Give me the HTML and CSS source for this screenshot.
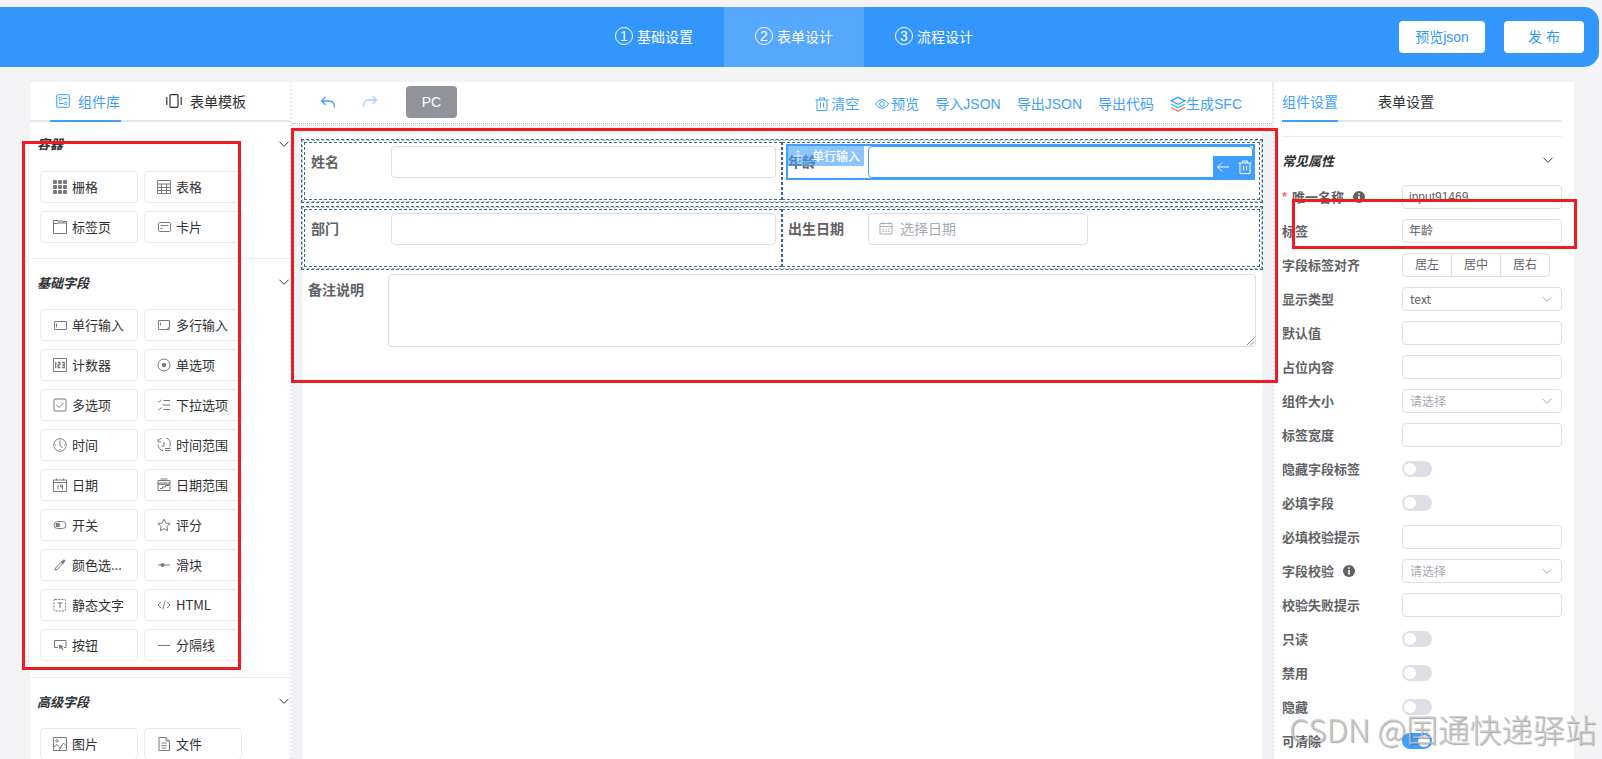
FILE: index.html
```html
<!DOCTYPE html>
<html lang="zh-CN">
<head>
    <meta charset="UTF-8">
    <meta name="viewport" content="width=device-width, initial-scale=1.0">
    <title>表单设计</title>
    <link rel="stylesheet" href="styles.css">
</head>
<body>
    <!-- icons -->
    <svg class="sprite" width="0" height="0">
        <symbol id="i-down" viewBox="0 0 12 12"><path d="M1.5 3.8 6 8.3l4.5-4.5"/></symbol>
        <symbol id="i-trash" viewBox="0 0 14 14"><path d="M.5 3h13M4.5 3V1h5v2M2 3v10.5h10V3M5.5 5.8v4.7M8.5 5.8v4.7"/></symbol>
        <symbol id="i-grid" viewBox="0 0 14 14"><g fill="currentColor" stroke="none"><rect width="4" height="4" rx="1"/><rect x="5" width="4" height="4" rx="1"/><rect x="10" width="4" height="4" rx="1"/><rect y="5" width="4" height="4" rx="1"/><rect x="5" y="5" width="4" height="4" rx="1"/><rect x="10" y="5" width="4" height="4" rx="1"/><rect y="10" width="4" height="4" rx="1"/><rect x="5" y="10" width="4" height="4" rx="1"/><rect x="10" y="10" width="4" height="4" rx="1"/></g></symbol>
        <symbol id="i-table" viewBox="0 0 14 14"><path d="M.5.5h13v13H.5zM.5 4h13M.5 7.5h13M.5 10.5h13M4.500 4v9.500M9.500 4v9.500"/></symbol>
        <symbol id="i-tab" viewBox="0 0 14 14"><path d="M.5 13.500V.5h4.500l1 2.500h7.500v10.500zM.5 3.500h5M6 1h4v2M10 1.500h3.500V3"/></symbol>
        <symbol id="i-card" viewBox="0 0 14 14"><rect x="1.500" y="2.500" width="12" height="9" rx="1"/><path d="M3.500 5.500h8M3.500 8.500h2"/></symbol>
        <symbol id="i-input" viewBox="0 0 14 14"><rect x="1.500" y="3.500" width="12" height="8" rx=".5"/><path d="M3.500 5.500v4"/></symbol>
        <symbol id="i-textarea" viewBox="0 0 14 14"><rect x="1.500" y="2.500" width="11" height="9" rx=".5"/><path d="M3.500 4.500v3M10 11.500l2.500-2.500"/></symbol>
        <symbol id="i-number" viewBox="0 0 14 14"><path d="M.5.5h13v13H.5z"/><path stroke-width="1.300" d="M2.700 4v6M5 4.500h2v2.300H5.200v2.700h2.200M9 4.500h2.300v5H9M9.300 7h2"/></symbol>
        <symbol id="i-radio" viewBox="0 0 14 14"><circle cx="7" cy="7" r="6"/><circle cx="7" cy="7" r="2.200" fill="currentColor" stroke="none"/></symbol>
        <symbol id="i-check" viewBox="0 0 14 14"><rect x="1" y="1" width="12" height="12" rx="1"/><path d="m3.500 7 2.500 2.500L10.500 5"/></symbol>
        <symbol id="i-list" viewBox="0 0 14 14"><path d="M6.500 2.500h6.500M5.500 7h7.500M6.500 11.500h6.500M1 3l1.200 1.200L4.500 2M1 10.500l1.200 1.200L4.500 9.500"/></symbol>
        <symbol id="i-clock" viewBox="0 0 14 14"><circle cx="7" cy="7" r="6.300"/><path d="M7 2.500V7l2.500 3M2 7h1M11 7h1M7 12v-1"/></symbol>
        <symbol id="i-clockr" viewBox="0 0 14 14"><path d="M2 2.500A6 6 0 0 1 13 7v2M1 1v3h3M1 6.500a6 6 0 0 0 5.500 6.200M7 4v4H4.500M8 10.500h5.500M8 12.500h5.500"/></symbol>
        <symbol id="i-date" viewBox="0 0 14 14"><path d="M.5 2h13v11.500H.5zM.5 4.500h13M3.500.5v2M10.500.5v2M5 7v4.500M7.500 7h2v4.500M7.500 7v2h2"/></symbol>
        <symbol id="i-dater" viewBox="0 0 14 14"><path d="M1 2.500h12v10H1zM1 5h12M3.500 1h7M3 10.500h2.500V9h3V7.500H12M1 6.300h12"/></symbol>
        <symbol id="i-switch" viewBox="0 0 14 14"><rect x="1" y="3.500" width="12" height="7" rx="3.500"/><circle cx="4.800" cy="7" r="2.300" fill="currentColor" stroke="none"/></symbol>
        <symbol id="i-star" viewBox="0 0 14 14"><path d="m7 1.200 1.800 3.900 4.200.5-3.100 2.900.8 4.200L7 10.600l-3.700 2.100.8-4.200L1 5.600l4.200-.5z"/></symbol>
        <symbol id="i-pick" viewBox="0 0 14 14"><path d="m2 12 .8-2.500L9 3.500l1.500 1.500-6 6.200z"/><path stroke-width="2.400" d="m8.800 5.200 3-3"/></symbol>
        <symbol id="i-slider" viewBox="0 0 14 14"><path d="M1 7h12"/><circle cx="5.500" cy="7" r="2" fill="currentColor" stroke="none"/></symbol>
        <symbol id="i-text" viewBox="0 0 14 14"><rect x="1" y="1.500" width="11.500" height="11.500" rx="1" stroke-dasharray="2 1.200"/><path d="M4.500 5h5M7 5v5"/></symbol>
        <symbol id="i-html" viewBox="0 0 14 14"><path d="M4 4 1 7l3 3M10 4l3 3-3 3M8.200 2.500l-2.400 9"/></symbol>
        <symbol id="i-button" viewBox="0 0 14 14"><path d="M5 9.500H1.500v-7h11.500v7h-2"/><path d="m5.500 6.500 5.500 2-2 .8 1.500 2.500-1 .6L8 10l-1.500 1.300z" fill="currentColor" stroke="none"/></symbol>
        <symbol id="i-line" viewBox="0 0 14 14"><path d="M1 7.500h12"/></symbol>
        <symbol id="i-pic" viewBox="0 0 14 14"><path d="M.5.5h13v13H.5z"/><circle cx="4" cy="3.800" r="1.200"/><path d="m.5 10.500 3.500-3 3 3.500 3.500-5 3 3M6 13.500l1.500-2.500"/></symbol>
        <symbol id="i-file" viewBox="0 0 14 14"><path d="M2 .5h7l3.500 3.500v9.500H2zM9 .5V4h3.500M4.500 6h5M4.500 8.500h5M4.500 11h5"/></symbol>
        <symbol id="i-info" viewBox="0 0 12 12"><circle cx="6" cy="6" r="6" fill="currentColor" stroke="none"/><path stroke="#fff" stroke-width="1.600" d="M6 2.300v1.400M6 5v4.500"/></symbol>
    </svg>

    <header class="header">
        <nav class="steps">
            <div class="step"><span class="num">1</span>基础设置</div>
            <div class="step active"><span class="num">2</span>表单设计</div>
            <div class="step"><span class="num">3</span>流程设计</div>
        </nav>
        <div class="header-btns">
            <button class="btn-preview">预览json</button>
            <button class="btn-publish">发 布</button>
        </div>
    </header>

    <main class="designer">
        <aside class="left">
            <div class="left-tabs">
                <div class="left-tab active">
                    <svg class="tab-icon" viewBox="0 0 14 14"><rect x=".7" y=".7" width="12.600" height="12.600" rx="1"/><circle cx="4.500" cy="4.500" r="1.500"/><circle cx="9.500" cy="9.500" r="1.500"/><path d="M7 4.500h4M3 9.500h4M3 7h1"/></svg>
                    组件库
                </div>
                <div class="left-tab">
                    <svg class="tab-icon wide" viewBox="0 0 16 14"><rect x="4" y=".7" width="8" height="12.600" rx="1"/><path d="M.8 3v8M15.200 3v8"/></svg>
                    表单模板
                </div>
            </div>

            <section class="group first">
                <h3>容器<svg class="chev"><use href="#i-down"/></svg></h3>
                <div class="widgets">
                    <div class="widget"><svg><use href="#i-grid"/></svg>栅格</div>
                    <div class="widget"><svg><use href="#i-table"/></svg>表格</div>
                    <div class="widget"><svg><use href="#i-tab"/></svg>标签页</div>
                    <div class="widget"><svg><use href="#i-card"/></svg>卡片</div>
                </div>
            </section>

            <section class="group">
                <h3>基础字段<svg class="chev"><use href="#i-down"/></svg></h3>
                <div class="widgets">
                    <div class="widget"><svg><use href="#i-input"/></svg>单行输入</div>
                    <div class="widget"><svg><use href="#i-textarea"/></svg>多行输入</div>
                    <div class="widget"><svg><use href="#i-number"/></svg>计数器</div>
                    <div class="widget"><svg><use href="#i-radio"/></svg>单选项</div>
                    <div class="widget"><svg><use href="#i-check"/></svg>多选项</div>
                    <div class="widget"><svg><use href="#i-list"/></svg>下拉选项</div>
                    <div class="widget"><svg><use href="#i-clock"/></svg>时间</div>
                    <div class="widget"><svg><use href="#i-clockr"/></svg>时间范围</div>
                    <div class="widget"><svg><use href="#i-date"/></svg>日期</div>
                    <div class="widget"><svg><use href="#i-dater"/></svg>日期范围</div>
                    <div class="widget"><svg><use href="#i-switch"/></svg>开关</div>
                    <div class="widget"><svg><use href="#i-star"/></svg>评分</div>
                    <div class="widget"><svg><use href="#i-pick"/></svg>颜色选...</div>
                    <div class="widget"><svg><use href="#i-slider"/></svg>滑块</div>
                    <div class="widget"><svg><use href="#i-text"/></svg>静态文字</div>
                    <div class="widget"><svg><use href="#i-html"/></svg>HTML</div>
                    <div class="widget"><svg><use href="#i-button"/></svg>按钮</div>
                    <div class="widget"><svg><use href="#i-line"/></svg>分隔线</div>
                </div>
            </section>

            <section class="group">
                <h3>高级字段<svg class="chev"><use href="#i-down"/></svg></h3>
                <div class="widgets">
                    <div class="widget"><svg><use href="#i-pic"/></svg>图片</div>
                    <div class="widget"><svg><use href="#i-file"/></svg>文件</div>
                </div>
            </section>
        </aside>

        <section class="center">
            <div class="toolbar">
                <svg class="undo" viewBox="0 0 16 14"><path d="M5.500 1 1.500 5l4 4M1.500 5H9c3.500 0 5.500 2 5.500 6.500"/></svg>
                <svg class="undo redo" viewBox="0 0 16 14"><path d="m10.500 0 4 4-4 4M14.500 4H7c-3.500 0-5.500 2-5.500 6.500"/></svg>
                <button class="device">PC</button>
                <div class="actions">
                    <a><svg><use href="#i-trash"/></svg>清空</a>
                    <a><svg viewBox="0 0 14 14"><path d="M.5 7Q3.500 2.500 7 2.500T13.500 7Q10.500 11.500 7 11.500T.5 7z"/><circle cx="7" cy="7" r="2.300"/></svg>预览</a>
                    <a>导入JSON</a>
                    <a>导出JSON</a>
                    <a>导出代码</a>
                    <a class="sfc"><svg viewBox="0 0 16 16"><path stroke="#f56c6c" d="m1 11.500 7 3.500 7-3.500"/><path stroke="#36cfc9" d="m1 8.200 7 3.500 7-3.500"/><path d="m8 1.300 7 3.500-7 3.500-7-3.500z"/></svg>生成SFC</a>
                </div>
            </div>
            <div class="canvas">
                <div class="grid-row">
                    <div class="grid-col">
                        <div class="field"><label>姓名</label><div class="input"></div></div>
                    </div>
                    <div class="grid-col">
                        <div class="field selected">
                            <label>年龄</label><div class="input"></div>
                            <div class="drag-tag">
                                <svg viewBox="0 0 14 14"><path d="M7 1v12M1 7h12M5.500 2.500 7 1l1.500 1.500M5.500 11.500 7 13l1.500-1.500"/></svg>单行输入
                            </div>
                            <div class="field-actions">
                                <svg viewBox="0 0 14 14"><path d="M13 7H1.500M6 2.500 1.500 7 6 11.500"/></svg>
                                <svg><use href="#i-trash"/></svg>
                            </div>
                        </div>
                    </div>
                </div>
                <div class="grid-row">
                    <div class="grid-col">
                        <div class="field"><label>部门</label><div class="input"></div></div>
                    </div>
                    <div class="grid-col">
                        <div class="field">
                            <label>出生日期</label>
                            <div class="input date">
                                <svg viewBox="0 0 14 14"><path d="M1 2.500h12v10.500H1zM1 5.500h12M4 1v2.500M10 1v2.500M3.500 8h1.500M6.300 8h1.500M9 8h1.500M3.500 10.500h1.500M6.300 10.500h1.500M9 10.500h1.500"/></svg>选择日期
                            </div>
                        </div>
                    </div>
                </div>
                <div class="field remark">
                    <label>备注说明</label>
                    <div class="input area"><svg viewBox="0 0 10 10"><path d="m1 9 8-8M5 9l4-4"/></svg></div>
                </div>
            </div>
        </section>

        <aside class="right">
            <div class="right-tabs">
                <div class="right-tab active">组件设置</div>
                <div class="right-tab">表单设置</div>
            </div>
            <h3>常见属性<svg class="chev"><use href="#i-down"/></svg></h3>
            <div class="prop"><label><i>*</i>唯一名称<svg><use href="#i-info"/></svg></label><div class="mini">input91469</div></div>
            <div class="prop"><label>标签</label><div class="mini">年龄</div></div>
            <div class="prop"><label>字段标签对齐</label><div class="radios"><span>居左</span><span>居中</span><span>居右</span></div></div>
            <div class="prop"><label>显示类型</label><div class="mini select">text<svg class="chev"><use href="#i-down"/></svg></div></div>
            <div class="prop"><label>默认值</label><div class="mini"></div></div>
            <div class="prop"><label>占位内容</label><div class="mini"></div></div>
            <div class="prop"><label>组件大小</label><div class="mini select empty">请选择<svg class="chev"><use href="#i-down"/></svg></div></div>
            <div class="prop"><label>标签宽度</label><div class="mini"></div></div>
            <div class="prop"><label>隐藏字段标签</label><div class="switch"></div></div>
            <div class="prop"><label>必填字段</label><div class="switch"></div></div>
            <div class="prop"><label>必填校验提示</label><div class="mini"></div></div>
            <div class="prop"><label>字段校验<svg><use href="#i-info"/></svg></label><div class="mini select empty">请选择<svg class="chev"><use href="#i-down"/></svg></div></div>
            <div class="prop"><label>校验失败提示</label><div class="mini"></div></div>
            <div class="prop"><label>只读</label><div class="switch"></div></div>
            <div class="prop"><label>禁用</label><div class="switch"></div></div>
            <div class="prop"><label>隐藏</label><div class="switch"></div></div>
            <div class="prop"><label>可清除</label><div class="switch on"></div></div>
        </aside>
    </main>

    <div class="mark mark-widgets"></div>
    <div class="mark mark-canvas"></div>
    <div class="mark mark-label"></div>
    <div class="watermark">CSDN @国通快递驿站</div>
</body>
</html>
```

FILE: styles.css
```css
:root {
    --primary: #409eff;
    --border: #dcdfe6;
    --text: #303133;
    --text-regular: #606266;
    --placeholder: #a8abb2;
    --dash: #336699;
}

* {
    box-sizing: border-box;
}

body {
    margin: 0;
    height: 100vh;
    padding-top: 7px;
    position: relative;
    overflow: hidden;
    background: #f4f4f7;
    color: var(--text);
    font-family: "Liberation Sans", "Noto Sans CJK SC", sans-serif;
    font-size: 14px;
}

svg {
    fill: none;
    stroke: currentColor;
    stroke-width: 1;
    flex-shrink: 0;
}

.sprite {
    position: absolute;
}

button {
    font-family: inherit;
    font-size: 14px;
    border: none;
    padding: 0 0 2px;
    border-radius: 4px;
}

h3 {
    margin: 0;
    display: flex;
    align-items: center;
    justify-content: space-between;
    font-size: 13px;
    font-style: italic;
    font-weight: 700;
}

.chev {
    width: 12px;
    height: 12px;
}

/* header */
.header {
    width: 1599px;
    height: 60px;
    padding: 0 15px 0 584px;
    display: flex;
    align-items: center;
    justify-content: space-between;
    background: #3296fa;
    border-radius: 0 15px 15px 0;
}

.steps {
    display: flex;
}

.step {
    width: 140px;
    height: 60px;
    padding: 0 0 2px 31px;
    display: flex;
    align-items: center;
    gap: 4px;
    color: #fff;
}

.step.active {
    background: #55a8fd;
}

.num {
    width: 18px;
    height: 18px;
    border: 1px solid #fff;
    border-radius: 50%;
    line-height: 17px;
    text-align: center;
}

.header-btns {
    display: flex;
    gap: 19px;
}

.header-btns button {
    width: 80px;
    height: 32px;
    background: #fff;
    color: #3296fa;
}

.header-btns .btn-preview {
    width: 86px;
}

/* layout */
.designer {
    width: 1544px;
    height: 677px;
    margin: 15px 0 0 30px;
    display: flex;
    overflow: hidden;
    background: #fff;
}

.left {
    width: 262px;
    border-right: 2px dotted #e9e9f3;
}

.left-tabs {
    height: 40px;
    padding-left: 20px;
    display: flex;
    gap: 39px;
    border-bottom: 2px solid #e4e7ed;
}

.left-tab {
    height: 40px;
    padding: 0 0 2px 6px;
    display: flex;
    align-items: center;
    gap: 8px;
}

.left-tab.active {
    padding-right: 1px;
    padding-bottom: 0;
    color: var(--primary);
    border-bottom: 2px solid var(--primary);
}

.tab-icon {
    width: 14px;
    height: 14px;
}

.tab-icon.wide {
    width: 16px;
    stroke-width: 1.2;
}

.group {
    padding-bottom: 16px;
    border-bottom: 1px solid #ebeef5;
}

.group h3 {
    height: 48px;
    padding: 0 0 2px 7px;
    margin-bottom: 2px;
}

.group.first {
    padding-bottom: 15px;
}

.group.first h3 {
    height: 45px;
    margin-bottom: 4px;
}

.widgets {
    padding-left: 10px;
    display: grid;
    grid-template-columns: 98px 98px;
    gap: 8px 6px;
}

.widget {
    height: 32px;
    padding-left: 12px;
    display: flex;
    align-items: center;
    gap: 5px;
    border: 1px solid #e8e9eb;
    border-radius: 4px;
    font-family: "Noto Sans CJK SC", sans-serif;
    font-size: 13px;
    line-height: 20px;
    white-space: nowrap;
}

.widget svg {
    width: 14px;
    height: 14px;
    color: #77797d;
}

/* center */
.center {
    width: 982px;
    display: flex;
    flex-direction: column;
    background: #f0f2f5;
    border-right: 2px dotted #e9e9f3;
}

.toolbar {
    height: 42px;
    flex-shrink: 0;
    padding: 0 30px 0 28px;
    display: flex;
    align-items: center;
    background: #fff;
    border-bottom: 1px dotted #b5b5b5;
}

.undo {
    width: 16px;
    height: 14px;
    margin-right: 26px;
    color: var(--primary);
    stroke-width: 1.3;
}

.undo.redo {
    color: #a0cfff;
    margin-right: 28px;
}

.device {
    width: 51px;
    height: 32px;
    margin-bottom: 1px;
    padding: 0;
    background: #909399;
    color: #fff;
}

.actions {
    margin-left: auto;
    padding-top: 1px;
    display: flex;
    gap: 16px;
    color: var(--primary);
}

.actions a {
    display: flex;
    align-items: center;
    gap: 2px;
}

.actions svg {
    width: 14px;
    height: 14px;
    margin-top: 2px;
}

.actions .sfc {
    gap: 0;
}

.actions .sfc svg {
    width: 16px;
    height: 16px;
    stroke-width: 1.3;
}

.canvas {
    flex: 1;
    margin: 10px 10px 0;
    padding-top: 6px;
    background: #fff;
}

/* double dashed frame: outline + grey border around the columns */
.grid-row {
    height: 62px;
    padding: 1px;
    margin-bottom: 5px;
    display: flex;
    border: 1px dashed #bbb;
    outline: 1px dashed var(--dash);
}

.grid-col {
    flex: 1;
    padding: 3px 5px 0 6px;
    border: 1px dashed var(--dash);
}

.grid-col + .grid-col {
    padding: 3px 6px 0 5px;
}

.field {
    position: relative;
    display: flex;
}

.field label {
    width: 80px;
    line-height: 32px;
    color: var(--text-regular);
    font-weight: 700;
}

.input {
    flex: 1;
    height: 32px;
    border: 1px solid var(--border);
    border-radius: 4px;
}

.input.date {
    flex: none;
    width: 220px;
    padding: 0 0 2px 10px;
    display: flex;
    align-items: center;
    gap: 7px;
    color: var(--placeholder);
}

.date svg {
    width: 14px;
    height: 14px;
}

.selected {
    outline: 2px solid var(--primary);
}

.selected .input {
    border-color: var(--primary);
}

.drag-tag {
    position: absolute;
    left: 0;
    top: 0;
    width: 76px;
    height: 20px;
    padding: 0 0 1px 4px;
    display: flex;
    align-items: center;
    gap: 8px;
    background: rgba(64, 158, 255, 0.6);
    color: #fff;
    font-size: 12px;
    font-weight: 500;
}

.drag-tag svg {
    width: 12px;
    height: 12px;
}

.field-actions {
    position: absolute;
    right: 0;
    bottom: 0;
    width: 40px;
    height: 22px;
    padding: 0 1px 0 3px;
    display: flex;
    align-items: center;
    justify-content: space-between;
    background: var(--primary);
    color: #fff;
}

.field-actions svg {
    width: 14px;
    height: 14px;
}

.remark {
    padding: 0 6px;
}

.input.area {
    height: 73px;
    display: flex;
    align-items: flex-end;
    justify-content: flex-end;
}

.area svg {
    width: 9px;
    height: 9px;
    color: #777;
}

/* right */
.right {
    flex: 1;
    padding: 0 12px 0 8px;
}

.right-tabs {
    height: 40px;
    display: flex;
    gap: 40px;
    border-bottom: 2px solid #e4e7ed;
}

.right-tab {
    height: 40px;
    line-height: 40px;
}

.right-tab.active {
    color: var(--primary);
    border-bottom: 2px solid var(--primary);
}

.right h3 {
    height: 49px;
    margin-top: 14px;
    padding: 0 8px 2px 0;
    border-top: 1px solid #ebeef5;
}

.prop {
    height: 24px;
    margin-bottom: 10px;
    display: flex;
    align-items: center;
}

.prop label {
    width: 120px;
    padding-bottom: 2px;
    display: flex;
    align-items: center;
    color: var(--text-regular);
    font-size: 13px;
    font-weight: 700;
}

.prop label i {
    width: 10px;
    color: #f56c6c;
    font-style: normal;
}

.prop label svg {
    width: 12px;
    height: 12px;
    margin: 2px 0 0 9px;
}

.mini {
    width: 160px;
    height: 24px;
    padding: 0 6px;
    border: 1px solid var(--border);
    border-radius: 4px;
    color: var(--text-regular);
    font-size: 12px;
    line-height: 22px;
}

.mini.select {
    padding: 0 8px 0 7px;
    display: flex;
    align-items: center;
    justify-content: space-between;
    font-family: "Noto Sans CJK SC", sans-serif;
}

.mini .chev {
    color: var(--placeholder);
}

.mini.empty {
    color: var(--placeholder);
}

.radios {
    display: flex;
    width: 148px;
    border: 1px solid var(--border);
    border-radius: 4px;
}

.radios span {
    flex: 1;
    line-height: 22px;
    text-align: center;
    font-size: 12px;
    color: var(--text-regular);
}

.radios span + span {
    border-left: 1px solid var(--border);
}

.switch {
    width: 30px;
    height: 16px;
    padding: 2px;
    display: flex;
    border-radius: 8px;
    background: var(--border);
}

.switch::before {
    content: "";
    width: 12px;
    height: 12px;
    border-radius: 50%;
    background: #fff;
}

.switch.on {
    justify-content: flex-end;
    background: var(--primary);
}

/* red highlight boxes */
.mark {
    position: absolute;
    border: 3px solid #ed1c24;
}

.mark-widgets {
    left: 22px;
    top: 141px;
    width: 219px;
    height: 529px;
}

.mark-canvas {
    left: 291px;
    top: 128px;
    width: 987px;
    height: 255px;
}

.mark-label {
    left: 1292px;
    top: 199px;
    width: 285px;
    height: 50px;
}

.watermark {
    position: absolute;
    left: 1289px;
    top: 705px;
    font-family: "Noto Sans CJK SC", sans-serif;
    font-size: 31.7px;
    font-weight: 300;
    line-height: 46px;
    white-space: nowrap;
    color: rgba(200, 200, 200, 0.8);
    text-shadow: 1px 1px 1px rgba(90, 90, 90, 0.55);
}
```
